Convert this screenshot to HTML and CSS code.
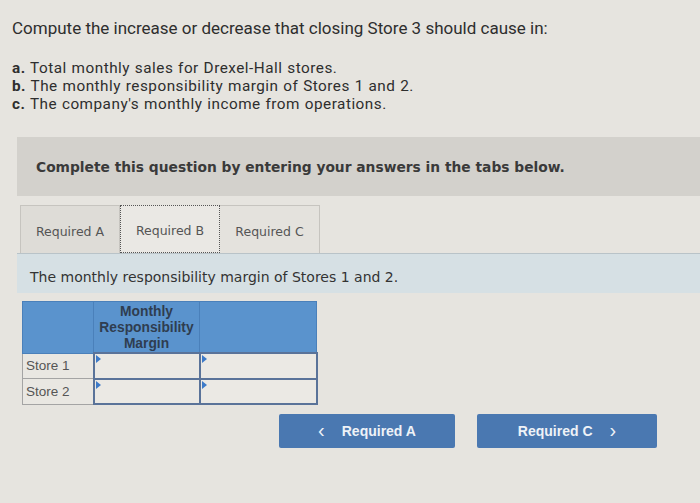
FILE: index.html
```html
<!DOCTYPE html>
<html>
<head>
<meta charset="utf-8">
<link rel="stylesheet" href="styles.css">
</head>
<body>
<div class="page">
  <p class="title">Compute the increase or decrease that closing Store 3 should cause in:</p>
  <ul class="parts">
    <li><b>a.</b> Total monthly sales for Drexel-Hall stores.</li>
    <li><b>b.</b> The monthly responsibility margin of Stores 1 and 2.</li>
    <li><b>c.</b> The company's monthly income from operations.</li>
  </ul>
  <div class="instr">Complete this question by entering your answers in the tabs below.</div>
  <div class="tabs">
    <div class="tab tab-a">Required A</div>
    <div class="tab tab-b">Required B</div>
    <div class="tab tab-c">Required C</div>
  </div>
  <div class="band">The monthly responsibility margin of Stores 1 and 2.</div>
  <table class="grid">
    <colgroup>
      <col class="c1">
      <col class="c2">
      <col class="c3">
    </colgroup>
    <tr class="head">
      <th></th>
      <th>Monthly<br>Responsibility<br>Margin</th>
      <th></th>
    </tr>
    <tr>
      <td class="lbl">Store 1</td>
      <td class="inp"><span class="tri"></span></td>
      <td class="inp"><span class="tri"></span></td>
    </tr>
    <tr>
      <td class="lbl">Store 2</td>
      <td class="inp"><span class="tri"></span></td>
      <td class="inp"><span class="tri"></span></td>
    </tr>
  </table>
  <div class="nav">
    <div class="btn btn-prev"><span class="chev">&lsaquo;</span>Required A</div>
    <div class="btn btn-next">Required C<span class="chev">&rsaquo;</span></div>
  </div>
</div>
</body>
</html>
```
FILE: styles.css
```css
html, body {
  margin: 0;
  padding: 0;
}
body {
  background: #e6e4df;
  width: 700px;
  height: 503px;
  overflow: hidden;
}
.page {
  padding-top: 18px;
}
.title {
  margin: 0 0 0 12px;
  font-family: Roboto, "Liberation Sans", sans-serif;
  font-size: 17px;
  line-height: 20px;
  color: #2e2e2e;
}
.parts {
  list-style: none;
  margin: 21px 0 0 12px;
  padding: 0;
  font-family: Roboto, "Liberation Sans", sans-serif;
  font-size: 15.3px;
  letter-spacing: 0.5px;
  word-spacing: 0.5px;
  line-height: 18px;
  color: #2e2e2e;
}
.parts b {
  font-weight: 700;
}
.instr {
  margin: 24px 0 0 17px;
  height: 59px;
  background: #d3d1cc;
  padding-left: 19px;
  box-sizing: border-box;
  display: flex;
  align-items: center;
  font-family: "DejaVu Sans", Verdana, sans-serif;
  font-weight: bold;
  font-size: 13.8px;
  color: #3a3a3a;
}
.tabs {
  display: flex;
  margin: 9px 0 0 20px;
  height: 48px;
}
.tab {
  width: 100px;
  box-sizing: border-box;
  display: flex;
  align-items: center;
  justify-content: center;
  padding-top: 3px;
  font-family: "DejaVu Sans", Verdana, sans-serif;
  font-size: 12.5px;
  color: #555;
  border: 1px solid #c6c4bf;
  border-bottom: none;
}
.tab-a {
  background: #dedcd7;
}
.tab-b {
  background: #eae8e4;
  border: 1px dotted #555;
}
.tab-c {
  background: #e4e2dd;
  border-left: none;
}
.band {
  margin-left: 17px;
  height: 40px;
  background: #d6e0e4;
  border-top: 1px solid #b9c3c8;
  padding-left: 13px;
  padding-top: 6px;
  box-sizing: border-box;
  display: flex;
  align-items: center;
  font-family: "DejaVu Sans", Verdana, sans-serif;
  font-size: 14px;
  color: #333;
}
.grid {
  margin: 8px 0 0 22px;
  border-collapse: collapse;
  table-layout: fixed;
  width: 294px;
  font-family: "Liberation Sans", Arial, sans-serif;
}
.c1 { width: 71px; }
.c2 { width: 106px; }
.c3 { width: 117px; }
.grid .head th {
  background: #5a93cd;
  border: 1px solid #4a80ba;
  height: 50px;
  padding: 2px 0 0 0;
  box-sizing: border-box;
  vertical-align: top;
  font-size: 13.8px;
  line-height: 16px;
  font-weight: bold;
  color: #2f3d50;
  text-align: center;
}
.grid td {
  height: 25.5px;
  padding: 0;
  box-sizing: border-box;
}
.lbl {
  background: #e9e7e2;
  border: 1px solid #a4a4a4;
  font-size: 13.5px;
  color: #555;
  padding-left: 3px !important;
}
.inp {
  position: relative;
  background: #ebe9e4;
  border: 2px solid #5a7399;
}
.tri {
  position: absolute;
  left: 1px;
  top: 1px;
  width: 0;
  height: 0;
  border-top: 4px solid transparent;
  border-bottom: 4px solid transparent;
  border-left: 5px solid #3d7ac8;
}
.nav {
  display: flex;
  gap: 22px;
  margin: 9px 0 0 279px;
}
.btn {
  height: 34px;
  background: #4a78b1;
  border-radius: 2px;
  display: flex;
  align-items: center;
  justify-content: center;
  font-family: "Liberation Sans", Arial, sans-serif;
  font-weight: bold;
  font-size: 14px;
  color: #eef2f7;
}
.btn-prev {
  width: 176px;
}
.btn-next {
  width: 180px;
}
.chev {
  font-size: 20px;
  font-weight: normal;
  line-height: 20px;
  margin-top: -3px;
}
.btn-prev .chev {
  margin-right: 17px;
}
.btn-next .chev {
  margin-left: 17px;
}
```
